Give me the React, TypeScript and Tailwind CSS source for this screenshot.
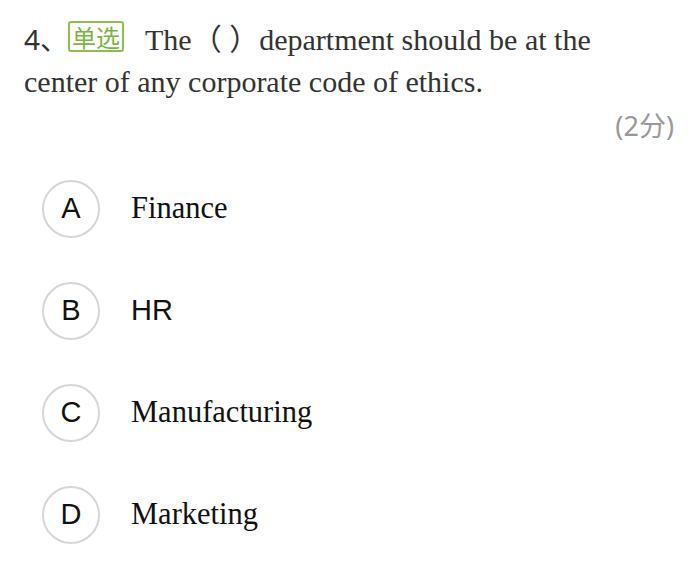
import type { ReactElement } from 'react'

const options = [
  { key: 'A', text: 'Finance', sans: false },
  { key: 'B', text: 'HR', sans: true },
  { key: 'C', text: 'Manufacturing', sans: false },
  { key: 'D', text: 'Marketing', sans: false },
]

export default function App(): ReactElement {
  return (
    <div className="w-[700px] h-[566px] bg-white overflow-hidden text-[#333]">
      <div className="px-6 pt-[18px]">
        <p className="w-[600px] font-['Liberation_Serif','Noto_Sans_CJK_SC',serif] text-[30px] leading-[42px]">
          <span className="font-['Noto_Sans','Noto_Sans_CJK_SC',sans-serif] text-[28px]">4、</span>
          <span className="inline-block align-[3px] ml-0 mr-[21px] border-2 border-[#8cbf4c] rounded-[3px] px-[2px] h-[31px] leading-[27px] text-[24px] text-[#7cb342] font-['Noto_Sans_CJK_SC',sans-serif]">
            单选
          </span>
          The（ ）department should be at the center of any corporate code of ethics.
        </p>
        <div className="flex justify-end pr-[2px] mt-[3px]">
          <span className="font-['Noto_Sans','Noto_Sans_CJK_SC',sans-serif] text-[27px] leading-[40px] text-[#999]">(2分)</span>
        </div>
      </div>
      <ul className="mt-[34px] pl-[42px] flex flex-col gap-[44px]">
        {options.map((o) => (
          <li key={o.key} className="flex items-center h-[58px]">
            <span className="w-[58px] h-[58px] rounded-full border-2 border-[#d6d6d6] flex items-center justify-center font-['Liberation_Sans',sans-serif] text-[29px] text-[#111]">
              {o.key}
            </span>
            <span
              className={
                o.sans
                  ? "ml-[31px] font-['Liberation_Sans',sans-serif] text-[29px] text-[#111]"
                  : "ml-[31px] font-['Liberation_Serif',serif] text-[30.5px] text-[#111]"
              }
            >
              {o.text}
            </span>
          </li>
        ))}
      </ul>
    </div>
  )
}
